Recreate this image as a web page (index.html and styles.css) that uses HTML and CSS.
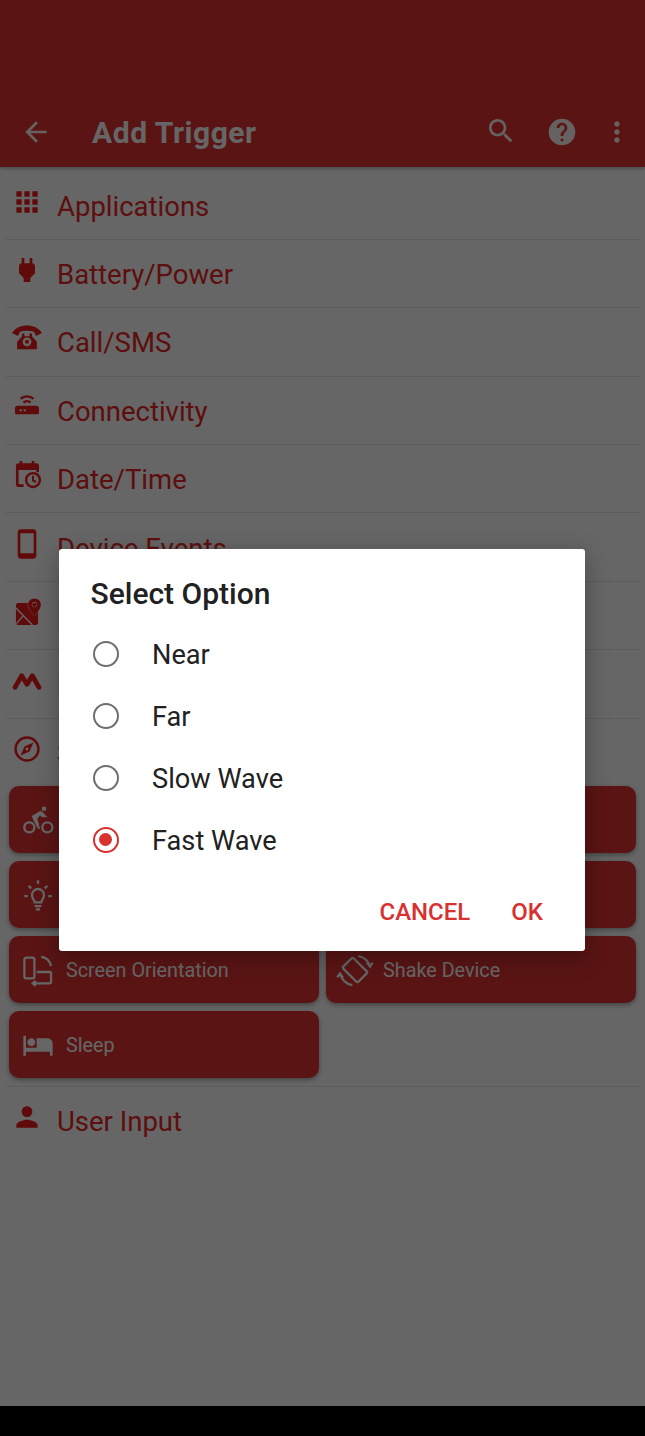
FILE: index.html
```html
<!DOCTYPE html>
<html>
  <head>
    <title>Add Trigger</title>
    <link rel="stylesheet" href="styles.css">
  </head>
  <body>
    <div class="screen">
      <div class="appbar">
        <svg class="bar-icon back" viewBox="0 0 24 24"><path d="M20 11H7.83l5.59-5.59L12 4l-8 8 8 8 1.41-1.41L7.83 13H20v-2z"/></svg>
        <span class="bar-title">Add Trigger</span>
        <svg class="bar-icon search" viewBox="0 0 24 24"><path d="M15.5 14h-.79l-.28-.27C15.41 12.59 16 11.11 16 9.5 16 5.91 13.09 3 9.5 3S3 5.91 3 9.5 5.91 16 9.5 16c1.61 0 3.09-.59 4.23-1.57l.27.28v.79l5 4.99L20.49 19l-4.99-5zm-6 0C7.01 14 5 11.99 5 9.5S7.01 5 9.5 5 14 7.01 14 9.5 11.99 14 9.5 14z"/></svg>
        <svg class="bar-icon help" viewBox="0 0 24 24"><path d="M12 2C6.48 2 2 6.48 2 12s4.48 10 10 10 10-4.48 10-10S17.52 2 12 2zm1 17h-2v-2h2v2zm2.07-7.75l-.9.92C13.45 12.9 13 13.5 13 15h-2v-.5c0-1.1.45-2.1 1.17-2.83l1.24-1.26c.37-.36.59-.86.59-1.41 0-1.1-.9-2-2-2s-2 .9-2 2H8c0-2.21 1.79-4 4-4s4 1.79 4 4c0 .88-.36 1.68-.93 2.25z"/></svg>
        <svg class="bar-icon more" viewBox="0 0 24 24"><path d="M12 8c1.1 0 2-.9 2-2s-.9-2-2-2-2 .9-2 2 .9 2 2 2zm0 2c-1.1 0-2 .9-2 2s.9 2 2 2 2-.9 2-2-.9-2-2-2zm0 6c-1.1 0-2 .9-2 2s.9 2 2 2 2-.9 2-2-.9-2-2-2z"/></svg>
      </div>

      <div class="list">
        <div class="row">
          <svg class="row-icon" viewBox="0 0 24 24"><path d="M4 8h4V4H4v4zm6 12h4v-4h-4v4zm-6 0h4v-4H4v4zm0-6h4v-4H4v4zm6 0h4v-4h-4v4zm6-10v4h4V4h-4zm-6 4h4V4h-4v4zm6 6h4v-4h-4v4zm0 6h4v-4h-4v4z"/></svg>
          <span class="row-label">Applications</span>
        </div>
        <div class="row">
          <svg class="row-icon" viewBox="0 0 24 24"><path d="M16.01 7L16 3h-2v4h-4V3H8v4h-.01C7 6.99 6 7.99 6 8.99v5.49L9.5 18v3h5v-3l3.5-3.51v-5.5c0-1-1-2-1.99-1.99z"/></svg>
          <span class="row-label">Battery/Power</span>
        </div>
        <div class="row">
          <svg class="row-icon" viewBox="0 0 24 24"><path fill-rule="evenodd" d="M.8 8.2C3 4.4 7.4 2.6 12 2.6s9 1.8 11.2 5.6l-4.4 2.3-1.6-3.2c-3.2-1-7.2-1-10.4 0l-1.6 3.2zM8.2 8.6h1.9v2h3.8v-2h1.9v2.2l3.6 4v5.6H4.600v-5.600l3.600-4zM12 11.600a3.300 3.300 0 1 0 0 6.600 3.300 3.300 0 0 0 0-6.600zm0 1.800a1.500 1.500 0 1 1 0 3 1.500 1.500 0 0 1 0-3z"/></svg>
          <span class="row-label">Call/SMS</span>
        </div>
        <div class="row">
          <svg class="row-icon" viewBox="0 0 24 24"><path fill-rule="evenodd" d="M5 11h14a2 2 0 0 1 2 2v3.500a1 1 0 0 1-1 1H4a1 1 0 0 1-1-1V13a2 2 0 0 1 2-2zm1.500 2.700v1.500H8v-1.500zm3 0v1.500H11v-1.500z"/><path class="arc" d="M7.200 5.800c2.800-2.400 6.800-2.400 9.600 0M9.300 8.600c1.600-1.200 3.800-1.200 5.400 0"/></svg>
          <span class="row-label">Connectivity</span>
        </div>
        <div class="row">
          <svg class="row-icon" viewBox="0 0 24 24"><path fill-rule="evenodd" d="M6.500 1.500h2v1.700h7V1.500h2v1.700H19a2 2 0 0 1 2 2V10h-2V8.200H5.700V19h3.800v2H5.700a2 2 0 0 1-2-2V5.200a2 2 0 0 1 2-2h.8z"/><circle class="arc" cx="16.500" cy="15.800" r="5.200"/><path class="thin" d="M16.500 12.500v3.500l2.300 1.400"/></svg>
          <span class="row-label">Date/Time</span>
        </div>
        <div class="row">
          <svg class="row-icon" viewBox="0 0 24 24"><path fill-rule="evenodd" d="M7.500 1h9A2.500 2.500 0 0 1 19 3.500v17a2.500 2.500 0 0 1-2.500 2.500h-9A2.500 2.500 0 0 1 5 20.500v-17A2.500 2.500 0 0 1 7.500 1zM7 4v15h10V4z"/></svg>
          <span class="row-label">Device Events</span>
        </div>
        <div class="row">
          <svg class="row-icon" viewBox="0 0 24 24"><rect x="3.700" y="5.300" width="16.600" height="16.500" rx="1.800"/><path class="cut" d="M3.700 9l12.400 12.800M4 20.700l5.600-6.400"/><path class="pin" d="M17.600 1.800c2.800 0 4.800 2.100 4.800 4.700 0 2.500-2.200 5.300-4.800 8.500-2.600-3.200-4.800-6-4.800-8.500 0-2.600 2-4.700 4.800-4.700zm0 2.700a2 2 0 1 0 0 4 2 2 0 0 0 0-4z" fill-rule="evenodd"/></svg>
          <span class="row-label">Location</span>
        </div>
        <div class="row">
          <svg class="row-icon" viewBox="0 0 24 24"><path class="logo" d="M3 17.500L8 8.800l4 6.400 4-6.400 5 8.700"/></svg>
          <span class="row-label">MacroDroid Specific</span>
        </div>
        <div class="row row-open">
          <svg class="row-icon" viewBox="0 0 24 24"><circle class="arc" cx="12" cy="12" r="8.600"/><path d="M16.800 7.200l-2.900 6.700-6.700 2.900 2.900-6.700zM12 10.900a1.100 1.100 0 1 0 0 2.200 1.100 1.100 0 0 0 0-2.200z" fill-rule="evenodd"/></svg>
          <span class="row-label">Sensors</span>
        </div>

        <div class="cards">
          <div class="card">
            <svg class="card-icon" viewBox="0 0 24 24"><circle cx="5.500" cy="17.500" r="3.800"/><circle cx="19" cy="17.500" r="3.800"/><path class="solid" d="M7.300 9L14 5l2 1.500 3 3.500h-4l-1.500-1.500-2 2.500 2 7.500h-1.500L8.500 12z"/><circle class="solid" cx="16.500" cy="3.500" r="1.700"/></svg>
          </div>
          <div class="card"></div>
          <div class="card">
            <svg class="card-icon" viewBox="0 0 24 24"><path d="M9.500 17.500c0-1.800-2-2.500-2-5.500a4.500 4.500 0 0 1 9 0c0 3-2 3.700-2 5.500zM9.500 20.300h5M10.500 22.800h3M12 1v2.500M1.800 12.800h2.500M19.700 12.800h2.800M5 5.100l1.900 1.900M19 5.100L17.100 7"/></svg>
          </div>
          <div class="card"></div>
          <div class="card">
            <svg class="card-icon" viewBox="0 0 24 24"><rect x="1.800" y="2.800" width="7.500" height="15.500" rx="1.400"/><path d="M11 13.500h9.800a1 1 0 0 1 1 1V21a1 1 0 0 1-1 1H8M14.300 2.200c3.800.2 6.800 3 7.500 6.800M10.300 20.200L8 22l2.300 1.800"/></svg>
            <span class="card-label">Screen Orientation</span>
          </div>
          <div class="card">
            <svg class="card-icon" viewBox="0 0 24 24"><rect x="6.500" y="4" width="11" height="16" rx="1.300" transform="rotate(-45 12 12)"/><path d="M14.500 1.500A11.500 11.500 0 0 1 23.300 9.500M.7 14.500A11.500 11.500 0 0 0 10 23.300M21 6.500l2.300 3 2-3M3 17.500l-2.300-3-2 3"/></svg>
            <span class="card-label">Shake Device</span>
          </div>
          <div class="card">
            <svg class="card-icon filled" viewBox="0 0 24 24"><path d="M7 13c1.660 0 3-1.340 3-3S8.660 7 7 7s-3 1.340-3 3 1.340 3 3 3zm12-6h-8v7H3V5H1v15h2v-3h18v3h2v-9c0-2.210-1.790-4-4-4z"/></svg>
            <span class="card-label">Sleep</span>
          </div>
        </div>

        <div class="row row-last">
          <svg class="row-icon" viewBox="0 0 24 24"><path d="M12 12c2.210 0 4-1.790 4-4s-1.790-4-4-4-4 1.790-4 4 1.790 4 4 4zm0 2c-2.670 0-8 1.790-8 4v2h16v-2c0-2.210-5.330-4-8-4z"/></svg>
          <span class="row-label">User Input</span>
        </div>
      </div>

      <div class="scrim"></div>

      <div class="dialog">
        <div class="dialog-title">Select Option</div>
        <div class="option"><span class="radio"></span><span class="option-text">Near</span></div>
        <div class="option"><span class="radio"></span><span class="option-text">Far</span></div>
        <div class="option"><span class="radio"></span><span class="option-text">Slow Wave</span></div>
        <div class="option"><span class="radio radio-on"></span><span class="option-text">Fast Wave</span></div>
        <div class="dialog-actions">
          <span class="action">CANCEL</span>
          <span class="action">OK</span>
        </div>
      </div>
    </div>
    <div class="navbar"></div>
  </body>
</html>
```

FILE: styles.css
```css
html, body {
  margin: 0;
  padding: 0;
  background: #000;
}
body {
  font-family: Roboto, "Liberation Sans", sans-serif;
  width: 645px;
  height: 1436px;
  overflow: hidden;
}
.screen {
  position: relative;
  height: 1406px;
  background: #fff;
  overflow: hidden;
}
.navbar {
  height: 30px;
  background: #000;
}
.appbar {
  height: 167px;
  box-sizing: border-box;
  padding: 97px 12px 0 20px;
  background: #e23432;
  display: flex;
  align-items: center;
  color: #fff;
  box-shadow: 0 2px 3px rgba(0, 0, 0, 0.25);
  position: relative;
}
.bar-icon {
  width: 32px;
  height: 32px;
  fill: rgba(255, 255, 255, 0.95);
  flex: none;
}
.bar-title {
  font-size: 30px;
  font-weight: 700;
  margin-left: 40px;
  flex: 1;
  letter-spacing: 0.55px;
}
.bar-icon.search {
  margin-right: 29px;
  margin-left: -1px;
  margin-top: -2px;
}
.bar-icon.help {
  margin-right: 23px;
}
.list {
  padding: 4.500px 5px 0 6px;
}
.row {
  height: 68.400px;
  box-sizing: border-box;
  border-bottom: 1px solid #f0e0e0;
  display: flex;
  align-items: center;
  padding: 0 0 2px 4.500px;
  color: #e82626;
}
.row-open {
  border-bottom: 0;
  height: 67.500px;
}
.row-last {
  border-top: 1px solid #f0e0e0;
  border-bottom: 0;
  margin-top: 8px;
}
.row-icon {
  width: 32px;
  height: 32px;
  fill: #f01c1c;
  flex: none;
  margin-top: -5px;
}
.row-icon .arc {
  fill: none;
  stroke: #f01c1c;
  stroke-width: 1.800;
}
.row-icon .thin {
  fill: none;
  stroke: #f01c1c;
  stroke-width: 1.500;
}
.row-icon .logo {
  fill: none;
  stroke: #f01c1c;
  stroke-width: 3.600;
  stroke-linecap: round;
  stroke-linejoin: round;
}
.row-icon .cut {
  fill: none;
  stroke: #fff;
  stroke-width: 1;
}
.row-icon .pin {
  stroke: #fff;
  stroke-width: 0.600;
  paint-order: stroke;
}
.row-label {
  font-size: 27.500px;
  margin-left: 14.500px;
  margin-top: 4px;
  white-space: nowrap;
}
.cards {
  display: grid;
  grid-template-columns: 310px 310px;
  grid-auto-rows: 67px;
  gap: 8px 7px;
  padding-left: 3px;
}
.card {
  background: #e23432;
  border-radius: 10px;
  box-shadow: 0 2px 5px rgba(0, 0, 0, 0.35);
  display: flex;
  align-items: center;
  padding-left: 12.500px;
  color: #fff;
}
.card-icon {
  width: 32px;
  height: 32px;
  flex: none;
  fill: none;
  stroke: #fff;
  stroke-width: 1.700;
  overflow: visible;
}
.card-icon .solid,
.card-icon.filled {
  fill: #fff;
  stroke: none;
}
.card-label {
  font-size: 19.800px;
  margin-left: 12.500px;
  margin-top: 2px;
  white-space: nowrap;
}
.scrim {
  position: absolute;
  top: 0;
  left: 0;
  right: 0;
  bottom: 0;
  background: rgba(0, 0, 0, 0.6);
}
.dialog {
  position: absolute;
  left: 59px;
  top: 549px;
  width: 526px;
  height: 402px;
  box-sizing: border-box;
  background: #fff;
  border-radius: 3px;
  box-shadow: 0 6px 24px rgba(0, 0, 0, 0.3);
  color: #212121;
}
.dialog-title {
  font-size: 30px;
  font-weight: 500;
  padding: 28px 0 0 31.500px;
  height: 74px;
  box-sizing: border-box;
  line-height: 34px;
}
.option {
  height: 62px;
  display: flex;
  align-items: center;
  padding-left: 33.500px;
  font-size: 27.200px;
}
.option-text {
  margin-top: 2px;
}
.radio {
  width: 26px;
  height: 26px;
  box-sizing: border-box;
  border: 2.500px solid #6e6e6e;
  border-radius: 50%;
  margin-right: 33.500px;
  position: relative;
  flex: none;
}
.radio-on {
  border-color: #d93030;
}
.radio-on::after {
  content: "";
  position: absolute;
  left: 4px;
  top: 4px;
  width: 13px;
  height: 13px;
  border-radius: 50%;
  background: #d93030;
}
.dialog-actions {
  display: flex;
  justify-content: flex-end;
  gap: 41px;
  padding: 27px 42px 0 0;
}
.action {
  font-size: 24px;
  font-weight: 500;
  color: #d93030;
  line-height: 28px;
}
```
